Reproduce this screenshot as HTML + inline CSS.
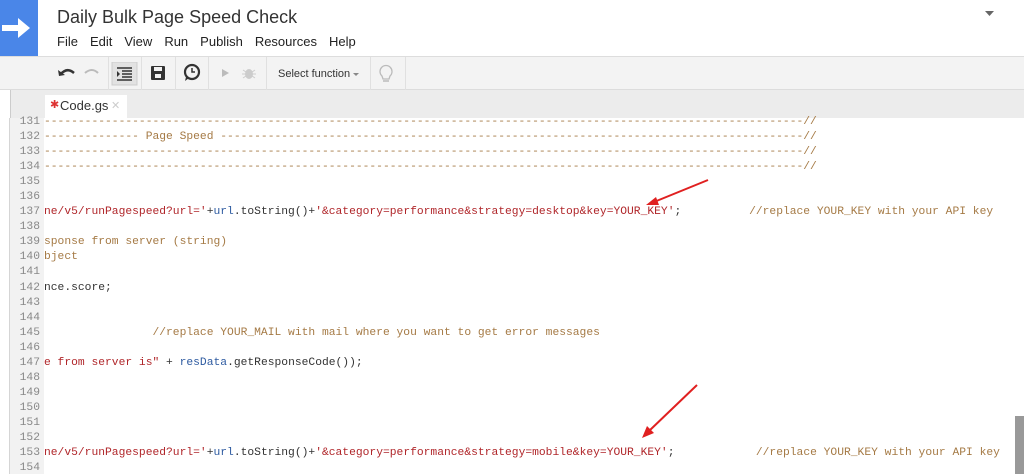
<!DOCTYPE html>
<html><head><meta charset="utf-8"><style>
*{margin:0;padding:0;box-sizing:border-box}
body{width:1024px;height:474px;overflow:hidden;background:#fff;position:relative;font-family:"Liberation Sans",Arial,sans-serif}
.abs{position:absolute}
.logo{left:0;top:0;width:38px;height:56px;background:#4a86e8}
.title{left:57px;top:7px;font-size:18px;color:#333}
.menu{left:57px;top:34px;font-size:13px;color:#222}
.menu span{margin-right:12px}
.tb{left:0;top:56px;width:1024px;height:34px;background:#f3f3f3;border-top:1px solid #ddd;border-bottom:1px solid #dcdcdc}
.sep{top:57px;width:1px;height:33px;background:#e0e0e0}
.tabbar{left:10px;top:90px;width:1014px;height:28px;background:#ececec;border-left:1px solid #ccc}
.tab{left:45px;top:95px;width:82px;height:23px;background:#fff}
.gut{left:9px;top:118px;width:35px;height:356px;background:#f2f2f2;border-left:1px solid #d5d5d5}
.code{left:0;top:115px;font-family:"Liberation Mono",monospace;font-size:11.3px;color:#333}
.code div{height:15.05px;line-height:15px;white-space:pre}
.ln{display:inline-block;width:44px;text-align:right;padding-right:4px;color:#888;vertical-align:top}
.c{color:#a57a45}.s{color:#b0262a}.v{color:#2d5aa0}
</style></head><body>
<div class="abs logo"><svg width="38" height="56"><path d="M2 28 H22" stroke="#fff" stroke-width="6"/><path d="M18 18 L30 28 L18 38Z" fill="#fff"/></svg></div>
<div class="abs title">Daily Bulk Page Speed Check</div>
<div class="abs menu"><span>File</span><span>Edit</span><span>View</span><span>Run</span><span>Publish</span><span>Resources</span><span>Help</span></div>
<svg class="abs" style="left:985px;top:11px" width="10" height="6"><path d="M0 0H9L4.5 5Z" fill="#666"/></svg>
<div class="abs tb"></div>
<div class="abs sep" style="left:108px"></div><div class="abs sep" style="left:141px"></div><div class="abs sep" style="left:175px"></div><div class="abs sep" style="left:208px"></div><div class="abs sep" style="left:266px"></div><div class="abs sep" style="left:370px"></div><div class="abs sep" style="left:405px"></div>
<svg class="abs" style="left:55px;top:62px" width="350" height="24">
<path d="M6 12 Q12 5 19 11" stroke="#333" stroke-width="2.5" fill="none"/><path d="M3 8 L4 14 L10 13Z" fill="#333"/>
<path d="M43 11 Q37 5 30 11" stroke="#bbb" stroke-width="2" fill="none"/>
<rect x="57" y="0" width="25" height="23" fill="#e2e2e2" stroke="#ccc"/>
<path d="M62 6H77M67 9H77M67 12H77M67 15H77M62 18H77" stroke="#333" stroke-width="1.5"/><path d="M62 9L65 12L62 15Z" fill="#333"/>
<rect x="96" y="4" width="14" height="14" rx="1" fill="#333"/><rect x="99" y="5" width="8" height="4" fill="#f3f3f3"/><rect x="100" y="12" width="6" height="4" fill="#f3f3f3"/>
<circle cx="137" cy="10" r="7" fill="none" stroke="#333" stroke-width="2.2"/><path d="M137 6V10H140" stroke="#333" stroke-width="1.5" fill="none"/><path d="M131 15L130 19L134 16Z" fill="#333"/>
<path d="M167 7L174 11L167 15Z" fill="#bbb"/>
<ellipse cx="194" cy="12" rx="4" ry="5" fill="#ccc"/><path d="M188 8L200 16M200 8L188 16M187 12H201" stroke="#ccc" stroke-width="1"/>
<text x="223" y="15" font-size="11" fill="#333" font-family="Liberation Sans">Select function</text><path d="M298 11H304L301 14Z" fill="#888"/>
<path d="M327 14 A6 6 0 1 1 335 14 L334 17H328Z" fill="none" stroke="#bbb" stroke-width="1.3"/><path d="M328 19H334" stroke="#bbb" stroke-width="1.5"/>
</svg>
<div class="abs tabbar"></div>
<div class="abs tab"><span style="position:absolute;left:5px;top:3px;color:#d33;font-size:11px">✱</span><span style="position:absolute;left:15px;top:3px;font-size:13px;color:#333">Code.gs</span><span style="position:absolute;left:66px;top:4px;color:#ccc;font-size:11px">✕</span></div>
<div class="abs gut"></div>
<div class="abs code">
<div><span class="ln">131</span><span class="c">----------------------------------------------------------------------------------------------------------------//</span></div>
<div><span class="ln">132</span><span class="c">-------------- Page Speed --------------------------------------------------------------------------------------//</span></div>
<div><span class="ln">133</span><span class="c">----------------------------------------------------------------------------------------------------------------//</span></div>
<div><span class="ln">134</span><span class="c">----------------------------------------------------------------------------------------------------------------//</span></div>
<div><span class="ln">135</span></div>
<div><span class="ln">136</span></div>
<div><span class="ln">137</span><span class="s">ne/v5/runPagespeed?url='</span>+<span class="v">url</span>.toString()+<span class="s">'&amp;category=performance&amp;strategy=desktop&amp;key=YOUR_KEY'</span>;          <span class="c">//replace YOUR_KEY with your API key</span></div>
<div><span class="ln">138</span></div>
<div><span class="ln">139</span><span class="c">sponse from server (string)</span></div>
<div><span class="ln">140</span><span class="c">bject</span></div>
<div><span class="ln">141</span></div>
<div><span class="ln">142</span>nce.score;</div>
<div><span class="ln">143</span></div>
<div><span class="ln">144</span></div>
<div><span class="ln">145</span>                <span class="c">//replace YOUR_MAIL with mail where you want to get error messages</span></div>
<div><span class="ln">146</span></div>
<div><span class="ln">147</span><span class="s">e from server is"</span> + <span class="v">resData</span>.getResponseCode());</div>
<div><span class="ln">148</span></div>
<div><span class="ln">149</span></div>
<div><span class="ln">150</span></div>
<div><span class="ln">151</span></div>
<div><span class="ln">152</span></div>
<div><span class="ln">153</span><span class="s">ne/v5/runPagespeed?url='</span>+<span class="v">url</span>.toString()+<span class="s">'&amp;category=performance&amp;strategy=mobile&amp;key=YOUR_KEY'</span>;            <span class="c">//replace YOUR_KEY with your API key</span></div>
<div><span class="ln">154</span></div>
</div>
<div class="abs" style="left:1015px;top:416px;width:9px;height:58px;background:#999"></div>
<svg class="abs" style="left:0;top:0" width="1024" height="474">
<path d="M708 180L654 202" stroke="#e02020" stroke-width="2"/><path d="M646 205L656 197L659 205Z" fill="#e02020"/>
<path d="M697 385L649 431" stroke="#e02020" stroke-width="2"/><path d="M642 438L647 426L654 433Z" fill="#e02020"/>
</svg>
</body></html>
